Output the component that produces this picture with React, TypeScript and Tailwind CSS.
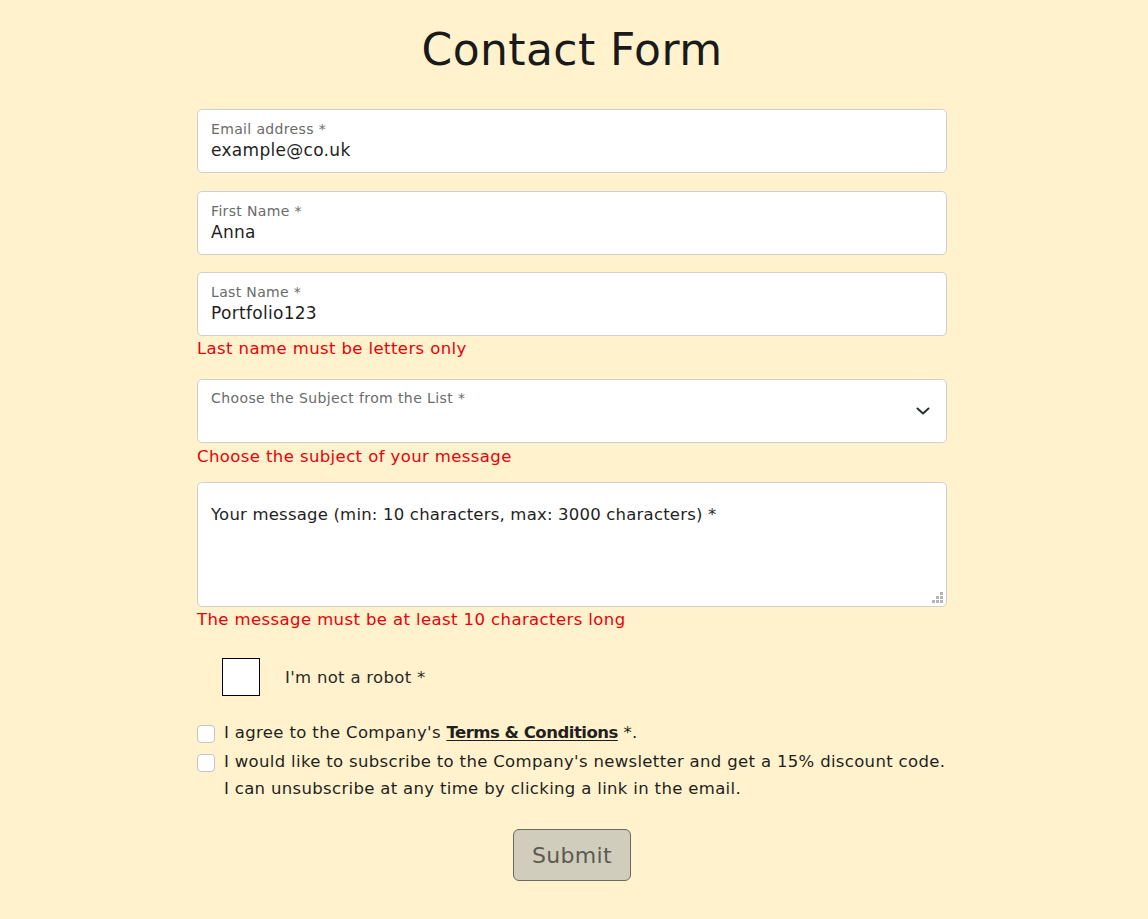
import React from "react";

const font = { fontFamily: '"DejaVu Sans", "Noto Sans", sans-serif' };

function Field({ label, value }: { label: string; value: string }) {
  return (
    <div className="h-[64px] rounded-[5px] border border-[#cfcfcf] bg-white px-[13px] pt-[10px]">
      <div className="text-[14px] leading-[18px] text-[#6b6b6b] tracking-[0.35px]">{label}</div>
      <div className="text-[17px] leading-[24px] text-[#1f1f1f] tracking-[0.3px]">{value}</div>
    </div>
  );
}

function Err({ mt, children }: { mt: string; children: React.ReactNode }) {
  return <div className={`${mt} text-[16.5px] leading-[22px] text-[#e8000b] tracking-[0.4px]`}>{children}</div>;
}

export default function App() {
  return (
    <div className="min-h-[919px] w-full bg-[#fff2cc] text-[#1f1f1f]" style={font}>
      <div className="mx-auto w-[750px] pb-[38px] pt-[24px] -translate-x-[2px]">
        <h1 className="text-center text-[44px] leading-[52px] text-[#1a1a1a] tracking-[0.4px]">Contact Form</h1>
        <div className="mt-[33px] flex flex-col">
          <Field label="Email address *" value="example@co.uk" />
          <div className="mt-[18px]">
            <Field label="First Name *" value="Anna" />
          </div>
          <div className="mt-[17px]">
            <Field label="Last Name *" value="Portfolio123" />
          </div>
          <Err mt="mt-[2px]">Last name must be letters only</Err>
          <div className="mt-[19px] flex h-[64px] items-center justify-between rounded-[5px] border border-[#cfcfcf] bg-white pl-[13px] pr-[16px]">
            <div className="self-start pt-[9px] text-[14px] leading-[18px] text-[#6b6b6b] tracking-[0.4px]">Choose the Subject from the List *</div>
            <svg width="14" height="8" viewBox="0 0 14 8" fill="none" stroke="#2d3035" strokeWidth="2" strokeLinecap="round" strokeLinejoin="round">
              <path d="M1.5 1.5l5.5 5 5.5-5" />
            </svg>
          </div>
          <Err mt="mt-[3px]">Choose the subject of your message</Err>
          <div className="relative mt-[14px] h-[125px] rounded-[5px] border border-[#cfcfcf] bg-white px-[13px] pt-[20px]">
            <div className="text-[16.5px] leading-[24px] text-[#1f1f1f] tracking-[0.2px]">Your message (min: 10 characters, max: 3000 characters) *</div>
            <svg className="absolute bottom-[2px] right-[2px]" width="12" height="12" viewBox="0 0 12 12" fill="#b5b5b5">
              <rect x="8" y="0" width="3" height="3" />
              <rect x="4" y="4" width="3" height="3" />
              <rect x="8" y="4" width="3" height="3" />
              <rect x="0" y="8" width="3" height="3" />
              <rect x="4" y="8" width="3" height="3" />
              <rect x="8" y="8" width="3" height="3" />
            </svg>
          </div>
          <Err mt="mt-[2px]">The message must be at least 10 characters long</Err>
          <div className="mt-[27px] flex items-center pl-[25px]">
            <div className="h-[38px] w-[38px] border-[1.5px] border-black bg-white" />
            <span className="ml-[25px] mt-[3px] text-[16.5px] text-[#2a2a2a] tracking-[0.3px]">I'm not a robot *</span>
          </div>
          <div className="mt-[27px] flex items-start">
            <div className="mt-[2px] h-[18px] w-[18px] shrink-0 rounded-[4px] border border-[#c4c4c4] bg-white" />
            <div className="ml-[9px] text-[16.5px] leading-[20px] text-[#1f1f1f] tracking-[0.35px]">
              I agree to the Company's{" "}
              <a className="font-bold tracking-[-0.5px] underline underline-offset-[2px]">Terms &amp; Conditions</a> *.
            </div>
          </div>
          <div className="mt-[9px] flex items-start">
            <div className="mt-[2px] h-[18px] w-[18px] shrink-0 rounded-[4px] border border-[#c4c4c4] bg-white" />
            <div className="ml-[9px] -mt-[4px] text-[16.5px] leading-[27px] text-[#1f1f1f] tracking-[0.33px]">
              I would like to subscribe to the Company's newsletter and get a 15% discount code.
              <br />
              I can unsubscribe at any time by clicking a link in the email.
            </div>
          </div>
          <div className="mt-[27px] flex justify-center">
            <button className="h-[52px] w-[118px] rounded-[6px] border border-[#6b6a5e] bg-[#d1cdbd] text-[22px] text-[#5c5b50] tracking-[0.3px]">
              Submit
            </button>
          </div>
        </div>
      </div>
    </div>
  );
}
